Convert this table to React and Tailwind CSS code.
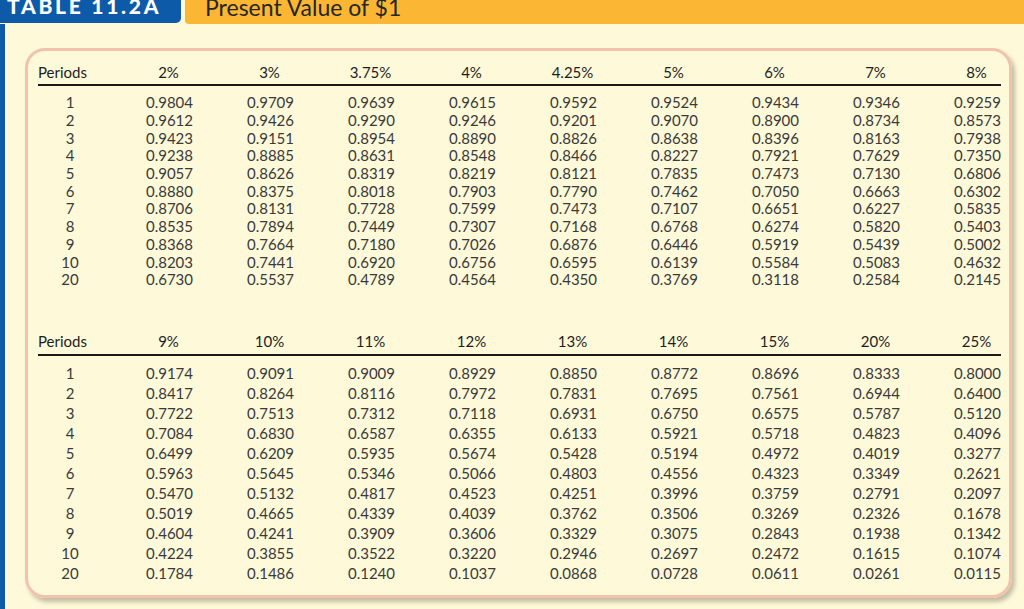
import React from 'react';

const top = {
  heads: ['2%', '3%', '3.75%', '4%', '4.25%', '5%', '6%', '7%', '8%'],
  rows: [
    ['1', '0.9804 0.9709 0.9639 0.9615 0.9592 0.9524 0.9434 0.9346 0.9259'],
    ['2', '0.9612 0.9426 0.9290 0.9246 0.9201 0.9070 0.8900 0.8734 0.8573'],
    ['3', '0.9423 0.9151 0.8954 0.8890 0.8826 0.8638 0.8396 0.8163 0.7938'],
    ['4', '0.9238 0.8885 0.8631 0.8548 0.8466 0.8227 0.7921 0.7629 0.7350'],
    ['5', '0.9057 0.8626 0.8319 0.8219 0.8121 0.7835 0.7473 0.7130 0.6806'],
    ['6', '0.8880 0.8375 0.8018 0.7903 0.7790 0.7462 0.7050 0.6663 0.6302'],
    ['7', '0.8706 0.8131 0.7728 0.7599 0.7473 0.7107 0.6651 0.6227 0.5835'],
    ['8', '0.8535 0.7894 0.7449 0.7307 0.7168 0.6768 0.6274 0.5820 0.5403'],
    ['9', '0.8368 0.7664 0.7180 0.7026 0.6876 0.6446 0.5919 0.5439 0.5002'],
    ['10', '0.8203 0.7441 0.6920 0.6756 0.6595 0.6139 0.5584 0.5083 0.4632'],
    ['20', '0.6730 0.5537 0.4789 0.4564 0.4350 0.3769 0.3118 0.2584 0.2145'],
  ],
};

const bottom = {
  heads: ['9%', '10%', '11%', '12%', '13%', '14%', '15%', '20%', '25%'],
  rows: [
    ['1', '0.9174 0.9091 0.9009 0.8929 0.8850 0.8772 0.8696 0.8333 0.8000'],
    ['2', '0.8417 0.8264 0.8116 0.7972 0.7831 0.7695 0.7561 0.6944 0.6400'],
    ['3', '0.7722 0.7513 0.7312 0.7118 0.6931 0.6750 0.6575 0.5787 0.5120'],
    ['4', '0.7084 0.6830 0.6587 0.6355 0.6133 0.5921 0.5718 0.4823 0.4096'],
    ['5', '0.6499 0.6209 0.5935 0.5674 0.5428 0.5194 0.4972 0.4019 0.3277'],
    ['6', '0.5963 0.5645 0.5346 0.5066 0.4803 0.4556 0.4323 0.3349 0.2621'],
    ['7', '0.5470 0.5132 0.4817 0.4523 0.4251 0.3996 0.3759 0.2791 0.2097'],
    ['8', '0.5019 0.4665 0.4339 0.4039 0.3762 0.3506 0.3269 0.2326 0.1678'],
    ['9', '0.4604 0.4241 0.3909 0.3606 0.3329 0.3075 0.2843 0.1938 0.1342'],
    ['10', '0.4224 0.3855 0.3522 0.3220 0.2946 0.2697 0.2472 0.1615 0.1074'],
    ['20', '0.1784 0.1486 0.1240 0.1037 0.0868 0.0728 0.0611 0.0261 0.0115'],
  ],
};

function Section({ data, rowH, className }) {
  return (
    <div className={className}>
      <div className="flex h-[18px] items-center text-[15px] text-[#1e1e1e]">
        <div className="w-[54px] leading-none">Periods</div>
        {data.heads.map((h) => (
          <div key={h} className="w-[101px] flex justify-end">
            <div className="w-[49px] flex justify-center leading-none whitespace-nowrap">{h}</div>
          </div>
        ))}
      </div>
      <div className="mt-[3px] h-[2px] w-[963px] bg-[#1a1a1a]" />
      <div className="mt-[8px]">
        {data.rows.map(([p, vals]) => (
          <div key={p} className={`flex items-center text-[15px] text-[#3a3a3a] ${rowH}`}>
            <div className="w-[54px] flex">
              <div className="ml-[20px] w-[24px] flex justify-center leading-none">{p}</div>
            </div>
            {vals.split(' ').map((v, i) => (
              <div key={i} className="w-[101px] text-right leading-none">{v}</div>
            ))}
          </div>
        ))}
      </div>
    </div>
  );
}

export default function App() {
  return (
    <div
      className="w-[1024px] h-[609px] overflow-hidden bg-[#fdf9d9] flex flex-col"
      style={{ fontFamily: 'Lato, "Open Sans", sans-serif' }}
    >
      <div className="flex h-[24px] shrink-0">
        <div className="w-[181px] h-[23px] bg-[#0d5aa9] rounded-br-[5px] pl-[7px] flex items-start">
          <span className="text-white text-[21px] font-black tracking-[0.13em] leading-none -mt-[5px] whitespace-nowrap">
            TABLE 11.2A
          </span>
        </div>
        <div className="ml-[4px] flex-1 h-[24px] bg-[#fbb733] rounded-bl-[4px] pl-[20px] flex items-start">
          <span className="text-[#262626] text-[23px] leading-none -mt-[4px] whitespace-nowrap">
            Present Value of $1
          </span>
        </div>
      </div>
      <div className="flex flex-1">
        <div className="w-[5px] bg-[#0d5aa9]" />
        <div className="flex-1 pl-[20px] pt-[24px]">
          <div className="w-[987px] h-[550px] border-[3px] border-[#f1c3ad] rounded-[20px] shadow-[3px_4px_4px_rgba(90,80,60,0.35)] pl-[10px] pt-[12px]">
            <Section data={top} rowH="h-[17.7px]" />
            <Section data={bottom} rowH="h-[20px]" className="mt-[44px]" />
          </div>
        </div>
      </div>
    </div>
  );
}
